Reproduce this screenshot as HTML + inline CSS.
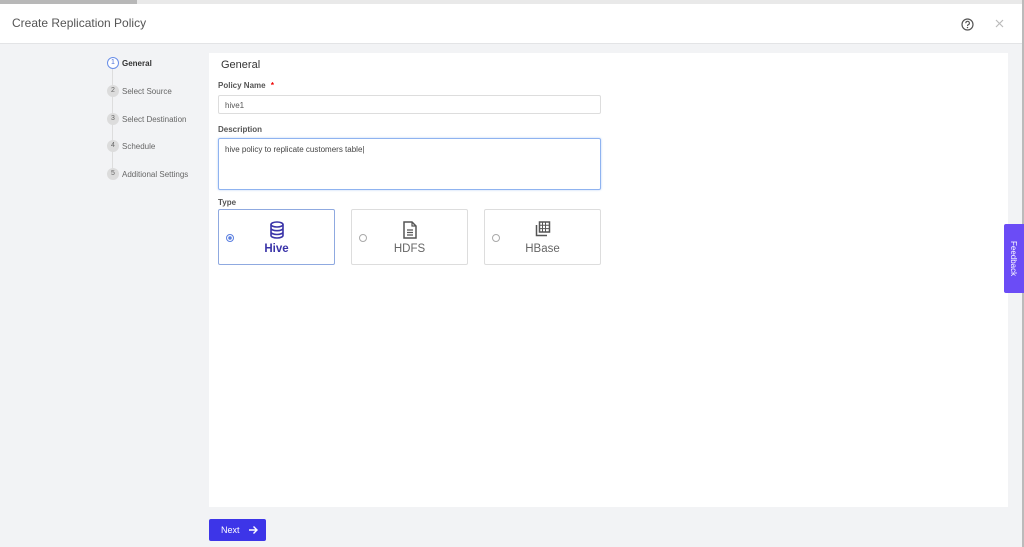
<!DOCTYPE html>
<html><head><style>
*{box-sizing:border-box;margin:0;padding:0}
body{width:1024px;height:547px;overflow:hidden;background:#f2f3f5;font-family:"Liberation Sans",sans-serif;position:relative}
.abs{position:absolute}
.hdr{left:0;top:4px;width:1022px;height:40px;background:#fff;border-bottom:1px solid #e3e4e6}
.step{position:absolute;left:107px;font-size:8px;color:#666}
.step .c{position:absolute;left:0;top:0;width:12px;height:12px;border-radius:50%;background:#dcdcdc;color:#666;font-size:7px;text-align:center;line-height:12px}
.step .t{position:absolute;left:15px;top:2px;white-space:nowrap}
.lbl{position:absolute;left:218px;font-size:8px;font-weight:bold;color:#555}
.card{position:absolute;top:209px;width:117px;height:56px;border:1px solid #ddd;border-radius:2px;background:#fff}
.card .r{position:absolute;left:7px;top:24px;width:8px;height:8px;border:1px solid #aaa;border-radius:50%}
.card .n{position:absolute;left:0;width:100%;top:33px;text-align:center;font-size:11.5px;color:#666}
.card svg{position:absolute;left:50px;top:11px}
</style></head><body>
<div class="abs" style="left:0;top:0;width:1024px;height:4px;background:#e9e9e9"></div>
<div class="abs" style="left:0;top:0;width:137px;height:5px;background:#888;opacity:.5"></div>
<div class="abs" style="left:1022px;top:0;width:2px;height:547px;background:#bbb"></div>
<div class="abs hdr"><div class="abs" style="left:12px;top:12px;font-size:12px;color:#555">Create Replication Policy</div>
<svg class="abs" style="left:961px;top:14px" width="13" height="13" viewBox="0 0 13 13"><circle cx="6.5" cy="6.5" r="5.5" fill="none" stroke="#555" stroke-width="1.2"/><path d="M4.8 5.2a1.8 1.8 0 1 1 2.4 1.6c-.6.3-.7.6-.7 1.2" fill="none" stroke="#555" stroke-width="1.1"/><circle cx="6.5" cy="9.6" r=".7" fill="#555"/></svg>
<svg class="abs" style="left:995px;top:15px" width="9" height="9"><path d="M1 1l7 7M8 1l-7 7" stroke="#bbb" stroke-width="1.2"/></svg></div>
<div class="abs" style="left:112px;top:66px;width:1px;height:110px;background:#ddd"></div>
<div class="step" style="top:57px"><div class="c" style="background:#fff;border:1px solid #6a8fe8;color:#4a6fd8;line-height:10px">1</div><div class="t" style="color:#333;font-weight:bold">General</div></div>
<div class="step" style="top:85px"><div class="c">2</div><div class="t">Select Source</div></div>
<div class="step" style="top:113px"><div class="c">3</div><div class="t">Select Destination</div></div>
<div class="step" style="top:140px"><div class="c">4</div><div class="t">Schedule</div></div>
<div class="step" style="top:168px"><div class="c">5</div><div class="t">Additional Settings</div></div>
<div class="abs" style="left:209px;top:53px;width:799px;height:454px;background:#fff"></div>
<div class="abs" style="left:221px;top:59px;font-size:11px;color:#333">General</div>
<div class="lbl" style="top:81px">Policy Name <span style="color:#e00;margin-left:3px">*</span></div>
<div class="abs" style="left:218px;top:95px;width:383px;height:19px;border:1px solid #ddd;border-radius:2px;font-size:8px;color:#555;padding:5px 6px">hive1</div>
<div class="lbl" style="top:125px">Description</div>
<div class="abs" style="left:218px;top:138px;width:383px;height:52px;border:1px solid #8fb3f0;border-radius:2px;box-shadow:0 0 2px #b8d0f8;font-size:8px;color:#444;padding:6px 6px">hive policy to replicate customers table|</div>
<div class="lbl" style="top:198px">Type</div>
<div class="card" style="left:218px;border-color:#8fa9e0"><div class="r" style="border-color:#5b7fe0;background:radial-gradient(circle,#5b7fe0 40%,#fff 45%)"></div>
<svg width="16" height="18" viewBox="0 0 16 18" style="left:50px"><ellipse cx="8" cy="3.5" rx="6" ry="2.5" fill="none" stroke="#3a34a8" stroke-width="1.6"/><path d="M2 3.5v11c0 1.4 2.7 2.5 6 2.5s6-1.1 6-2.5v-11M2 7.2c0 1.4 2.7 2.5 6 2.5s6-1.1 6-2.5M2 11c0 1.4 2.7 2.5 6 2.5s6-1.1 6-2.5" fill="none" stroke="#3a34a8" stroke-width="1.6"/></svg>
<div class="n" style="color:#3a34a8;font-weight:bold">Hive</div></div>
<div class="card" style="left:351px"><div class="r"></div>
<svg width="16" height="18" viewBox="0 0 16 18"><path d="M2 1h8l4 4v12H2z" fill="none" stroke="#555" stroke-width="1.5"/><path d="M10 1v4h4M5 9h6M5 11.5h6M5 14h6" stroke="#555" stroke-width="1.2" fill="none"/></svg>
<div class="n">HDFS</div></div>
<div class="card" style="left:484px"><div class="r"></div>
<svg width="16" height="16" viewBox="0 0 16 16"><path d="M1.5 4v10.5H12" fill="none" stroke="#555" stroke-width="1.5"/><rect x="4.5" y="1" width="10" height="10" fill="none" stroke="#555" stroke-width="1.5"/><path d="M7.5 1v10M10.5 1v10M4.5 4.3h10M4.5 7.6h10" stroke="#555" stroke-width="1"/></svg>
<div class="n">HBase</div></div>
<div class="abs" style="left:209px;top:519px;width:57px;height:22px;background:#3d35e8;border-radius:2px;color:#fff;font-size:9px;padding:6px 0 0 12px">Next
<svg class="abs" style="left:39px;top:6px" width="11" height="10"><path d="M1 5h8M5.5 1.5L9 5l-3.5 3.5" fill="none" stroke="#fff" stroke-width="1.4"/></svg></div>
<div class="abs" style="left:1004px;top:224px;width:20px;height:69px;background:#6b4cf6;border-radius:2px 0 0 2px"><div class="abs" style="left:5px;top:17px;font-size:8px;color:#fff;writing-mode:vertical-rl">Feedback</div></div>
</body></html>
